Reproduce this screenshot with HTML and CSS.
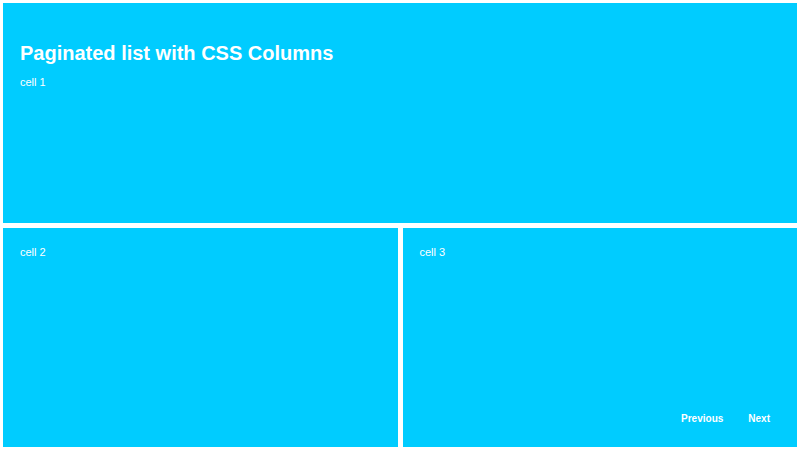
FILE: index.html
```html
<!DOCTYPE html>
<html lang="en">
<head>
    <meta charset="UTF-8">
    <meta name="viewport" content="width=device-width, initial-scale=1.0">
    <title>Paginated list with CSS Columns</title>
    <link rel="stylesheet" href="styles.css">
</head>
<body>
    <div class="grid">
        <div class="cell wide">
            <h1>Paginated list with CSS Columns</h1>
            <p>cell 1</p>
        </div>
        <div class="cell">
            <p>cell 2</p>
        </div>
        <div class="cell">
            <p>cell 3</p>
            <!-- pager sits in the corner of the last cell -->
            <div class="pager">
                <button class="page-btn">Previous</button>
                <button class="page-btn">Next</button>
            </div>
        </div>
    </div>
</body>
</html>
```

FILE: styles.css
```css
* {
    margin: 0;
    padding: 0;
    box-sizing: border-box;
}

body {
    font-family: 'Liberation Sans', Arial, sans-serif;
    background: #fff;
    color: #fff;
    height: 100vh;
}

.grid {
    display: grid;
    grid-template-columns: 1fr 1fr;
    grid-template-rows: 1fr 1fr;
    gap: 5px;
    padding: 3px;
    height: 100%;
}

.cell {
    position: relative;
    background: #00ccff;
    padding: 17px 17px;
}

.wide {
    grid-column: 1 / 3;
}

.cell h1 {
    font-size: 20px;
    line-height: 23px;
    font-weight: bold;
    margin: 22px 0 10px;
}

.cell p {
    font-size: 11px;
    line-height: 14px;
}

.pager {
    position: absolute;
    right: 17px;
    bottom: 18px;
    display: flex;
    gap: 5px;
}

.page-btn {
    background: none;
    border: none;
    color: #fff;
    font-family: inherit;
    font-size: 10px;
    line-height: 12px;
    font-weight: bold;
    padding: 4px 10px;
    cursor: pointer;
}
```
